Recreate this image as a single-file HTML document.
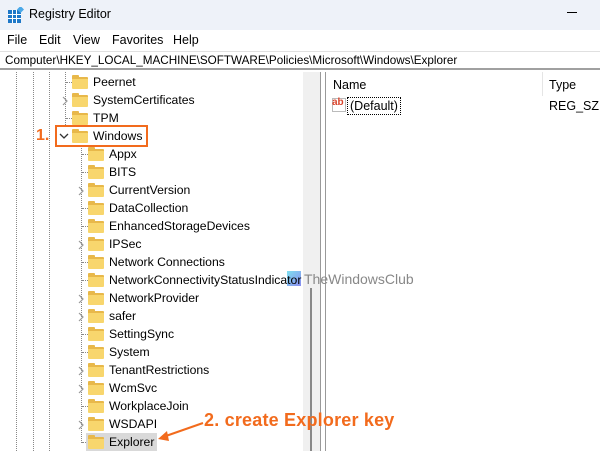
<!DOCTYPE html>
<html><head><style>
*{margin:0;padding:0;box-sizing:border-box}
body{width:600px;height:451px;overflow:hidden;background:#fff;font-family:"Liberation Sans",sans-serif;font-size:12px;color:#000;position:relative}
.abs{position:absolute}
.title{left:0;top:0;width:600px;height:30px;background:#eef2f9}
.menu{left:0;top:30px;width:600px;height:20px;background:#fff}
.menu span{position:absolute;top:3px;font-size:12.5px}
.addr{left:0;top:51px;width:600px;height:19px;border-top:1px solid #e0e0e0;border-bottom:2px solid #a0a0a0;font-size:11.7px;padding:2px 0 0 5px;white-space:nowrap;overflow:hidden}
.row{position:absolute;height:18px;line-height:18px;white-space:nowrap;font-size:12.2px}
.fold{position:absolute;width:16px;height:12px;top:3px;background:#f8d66d;border-top:2px solid #e8b84a;border-radius:1px}
.fold:before{content:"";position:absolute;left:0;top:-4px;width:7px;height:3px;background:#e8b84a;border-radius:1px 1px 0 0}
.vd{position:absolute;border-left:1px dotted #888;width:0}
.hd{position:absolute;border-top:1px dotted #888;height:0}
.or{color:#f26b1d;font-weight:bold}
</style></head><body>
<div class="abs title">
<svg class="abs" style="left:8px;top:7px" width="16" height="16"><rect x="0" y="3" width="13" height="13" fill="#1e78c8"/><g stroke="#fff" stroke-width="1"><line x1="4.5" y1="3" x2="4.5" y2="16"/><line x1="8.5" y1="3" x2="8.5" y2="16"/><line x1="0" y1="7.5" x2="13" y2="7.5"/><line x1="0" y1="11.5" x2="13" y2="11.5"/></g><rect x="10" y="0" width="5" height="5" fill="#4aa8e8" transform="rotate(45 12.5 2.5)"/></svg>
<span class="abs" style="left:29px;top:7px;font-size:12.5px">Registry Editor</span>
<span class="abs" style="left:567px;top:12px;width:10px;border-top:1px solid #000"></span>
</div>
<div class="abs menu"><span style="left:7px">File</span><span style="left:39px">Edit</span><span style="left:73px">View</span><span style="left:112px">Favorites</span><span style="left:173px">Help</span></div>
<div class="abs addr">Computer\HKEY_LOCAL_MACHINE\SOFTWARE\Policies\Microsoft\Windows\Explorer</div>

<div class="vd" style="left:16px;top:72px;height:379px"></div>
<div class="vd" style="left:33px;top:72px;height:379px"></div>
<div class="vd" style="left:49px;top:72px;height:379px"></div>
<div class="vd" style="left:65px;top:72px;height:55px"></div>
<div class="vd" style="left:81px;top:146px;height:297px"></div>

<div class="abs" style="left:303px;top:72px;width:17px;height:379px;background:#f0f0f0"></div>
<div class="abs" style="left:310px;top:288px;width:2px;height:163px;background:#888"></div>
<div class="abs" style="left:320px;top:72px;width:1px;height:379px;background:#999"></div>
<div class="abs" style="left:325px;top:72px;width:1px;height:379px;background:#999"></div>

<div id="tree"></div>
<div class="abs" style="left:86px;top:433px;width:71px;height:18px;background:#d9d9d9"></div>
<script>
var rows=[["Peernet",0,0],["SystemCertificates",0,1],["TPM",0,0],["Windows",0,2],
["Appx",1,0],["BITS",1,0],["CurrentVersion",1,1],["DataCollection",1,0],["EnhancedStorageDevices",1,0],["IPSec",1,1],["Network Connections",1,0],["NetworkConnectivityStatusIndicator",1,0],["NetworkProvider",1,1],["safer",1,1],["SettingSync",1,0],["System",1,0],["TenantRestrictions",1,1],["WcmSvc",1,1],["WorkplaceJoin",1,0],["WSDAPI",1,1],["Explorer",1,0]];
var h="";
rows.forEach(function(r,i){
 var top=73+18*i, off=r[1]?16:0;
 if(r[2]==0) h+='<div class="hd" style="left:'+(66+off)+'px;top:'+(top+9)+'px;width:6px"></div>';
 if(r[2]==1) h+='<svg class="abs" style="left:'+(61+off)+'px;top:'+(top+5)+'px" width="8" height="10"><path d="M2 1 L6 5 L2 9" stroke="#999" stroke-width="1.2" fill="none"/></svg>';
 if(r[2]==2) h+='<svg class="abs" style="left:59px;top:'+(top+5)+'px" width="10" height="8"><path d="M1 2 L5 6 L9 2" stroke="#333" stroke-width="1.3" fill="none"/></svg>';
 h+='<div class="fold" style="left:'+(72+off)+'px;top:'+(top+4)+'px;z-index:2"></div>';
 h+='<div class="row" style="left:'+(93+off)+'px;top:'+top+'px;z-index:3">'+r[0]+'</div>';
});
document.getElementById('tree').innerHTML=h;
</script>

<div class="abs" style="left:55px;top:125px;width:93px;height:22px;border:2px solid #f26b1d"></div>
<div class="abs or" style="left:36px;top:127px;font-size:16px">1.</div>
<div class="abs or" style="left:204px;top:410px;font-size:18px;letter-spacing:0.2px">2. create Explorer key</div>
<svg class="abs" style="left:155px;top:415px" width="50" height="30"><line x1="48" y1="8" x2="8" y2="22" stroke="#f26b1d" stroke-width="2"/><path d="M3 24 L12 16 L14 26 Z" fill="#f26b1d"/></svg>

<div class="abs" style="left:287px;top:271px;width:14px;height:15px;background:linear-gradient(135deg,#7fe0f0,#8a8cf0)"></div>
<div class="abs" style="left:304px;top:271px;font-size:14px;color:#888">TheWindowsClub</div>

<div class="abs" style="left:333px;top:78px;font-size:12.5px">Name</div>
<div class="abs" style="left:542px;top:72px;width:1px;height:24px;background:#e5e5e5"></div>
<div class="abs" style="left:549px;top:78px;font-size:12.5px">Type</div>
<div class="abs" style="left:332px;top:98px;width:14px;height:14px;border:1px solid #bbb;background:#fff"></div>
<div class="abs" style="left:332px;top:97px;font-size:10px;font-weight:bold;color:#d9432b">ab</div>
<div class="abs" style="left:347px;top:97px;height:18px;border:1px dotted #000;padding:1px 2px;font-size:12.5px">(Default)</div>
<div class="abs" style="left:549px;top:99px;font-size:12.5px">REG_SZ</div>
</body></html>
